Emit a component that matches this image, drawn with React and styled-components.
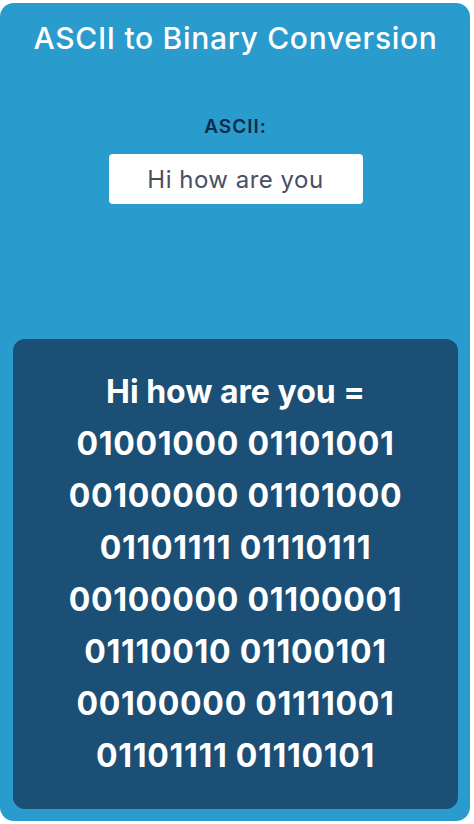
import React, { useState } from 'react';
import styled, { createGlobalStyle } from 'styled-components';

const GlobalStyle = createGlobalStyle`
  html, body {
    margin: 0;
    padding: 0;
    background: #ffffff;
    font-family: Inter, "Noto Sans", sans-serif;
  }
`;

const Page = styled.div`
  padding-top: 3px;
  width: 470px;
`;

const Card = styled.div`
  background: #2a9bcd;
  border-radius: 14px;
  padding: 15px 12px 12px 13px;
  display: flex;
  flex-direction: column;
  align-items: center;
`;

const Title = styled.h1`
  margin: 0;
  color: #ffffff;
  font-size: 30px;
  font-weight: 500;
  letter-spacing: 0.7px;
  line-height: 40px;
  text-align: center;
`;

const Form = styled.div`
  margin-top: 57px;
  display: flex;
  flex-direction: column;
  align-items: center;
  gap: 15px;
  height: 224px;
`;

const Label = styled.label`
  color: #0d2b4b;
  font-size: 19px;
  font-weight: 600;
  letter-spacing: 1px;
  line-height: 24px;
`;

const Input = styled.input`
  box-sizing: border-box;
  width: 254px;
  height: 50px;
  border: none;
  border-radius: 4px;
  background: #ffffff;
  color: #4a5060;
  font-family: Inter, "Noto Sans", sans-serif;
  font-size: 24px;
  letter-spacing: 0.5px;
  text-align: center;
  outline: none;
`;

const Result = styled.div`
  box-sizing: border-box;
  width: 445px;
  background: #1c4f75;
  border-radius: 12px;
  padding: 27px 40px;
  color: #ffffff;
  font-size: 32px;
  font-weight: 700;
  line-height: 52px;
  text-align: center;
`;

const Bits = styled.span`
  letter-spacing: 0.7px;
`;

const toBinary = (s) =>
  s.split('').map((c) => c.charCodeAt(0).toString(2).padStart(8, '0'));

export default function App() {
  const [text, setText] = useState('Hi how are you');
  const bits = toBinary(text);

  return (
    <>
      <GlobalStyle />
      <Page>
        <Card>
          <Title>ASCII to Binary Conversion</Title>
          <Form>
            <Label htmlFor="ascii">ASCII:</Label>
            <Input id="ascii" value={text} onChange={(e) => setText(e.target.value)} />
          </Form>
          <Result>
            {text} = <Bits>{bits.join(' ')}</Bits>
          </Result>
        </Card>
      </Page>
    </>
  );
}
